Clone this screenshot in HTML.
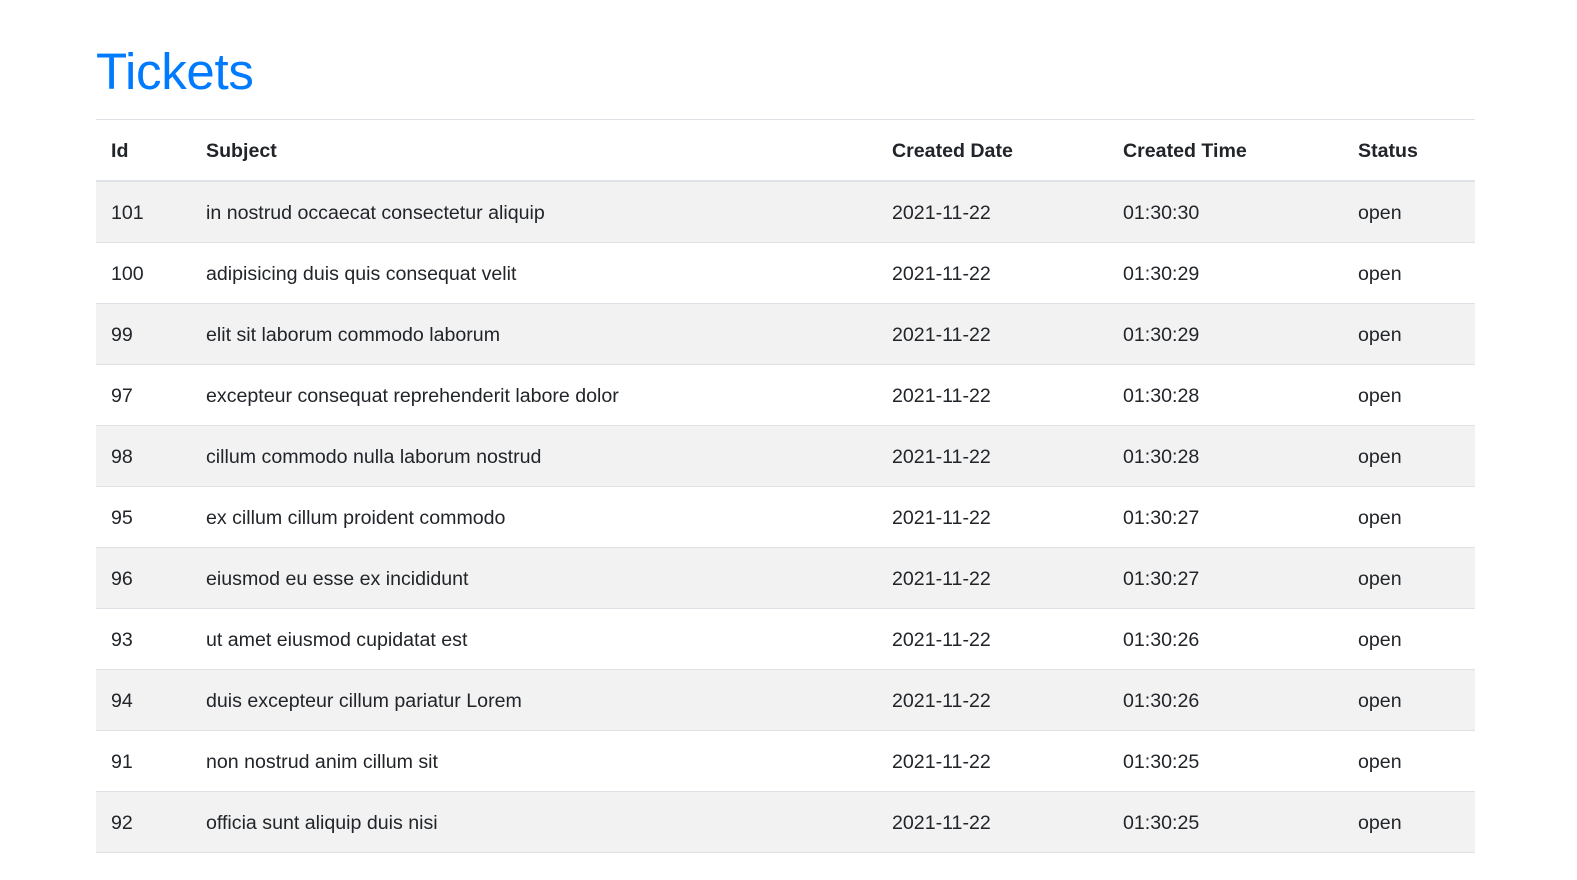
<!DOCTYPE html>
<html><head><style>
body{margin:0;background:#fff;font-family:"Liberation Sans",sans-serif;color:#212529}
.c{position:absolute;left:96px;top:0;width:1379px}
h1{margin:0;position:absolute;top:42px;left:0;font-size:51px;font-weight:500;color:#007bff;line-height:60px;letter-spacing:-0.3px}
table{position:absolute;top:119px;left:0;width:1379px;border-collapse:collapse;table-layout:fixed;font-size:19.6px}
th,td{padding:2px 15px 0;height:58px;text-align:left;border-top:1px solid #dee2e6;vertical-align:middle}
th{font-weight:bold;border-bottom:2px solid #dee2e6;height:58px}
tbody tr:nth-child(odd){background:#f2f2f2}
tbody tr:last-child td{border-bottom:1px solid #dee2e6}
</style></head><body>
<div class="c">
<h1>Tickets</h1>
<table>
<colgroup><col style="width:95px"><col style="width:686px"><col style="width:231px"><col style="width:235px"><col style="width:132px"></colgroup>
<thead><tr><th>Id</th><th>Subject</th><th>Created Date</th><th>Created Time</th><th>Status</th></tr></thead>
<tbody>
<tr><td>101</td><td>in nostrud occaecat consectetur aliquip</td><td>2021-11-22</td><td>01:30:30</td><td>open</td></tr>
<tr><td>100</td><td>adipisicing duis quis consequat velit</td><td>2021-11-22</td><td>01:30:29</td><td>open</td></tr>
<tr><td>99</td><td>elit sit laborum commodo laborum</td><td>2021-11-22</td><td>01:30:29</td><td>open</td></tr>
<tr><td>97</td><td>excepteur consequat reprehenderit labore dolor</td><td>2021-11-22</td><td>01:30:28</td><td>open</td></tr>
<tr><td>98</td><td>cillum commodo nulla laborum nostrud</td><td>2021-11-22</td><td>01:30:28</td><td>open</td></tr>
<tr><td>95</td><td>ex cillum cillum proident commodo</td><td>2021-11-22</td><td>01:30:27</td><td>open</td></tr>
<tr><td>96</td><td>eiusmod eu esse ex incididunt</td><td>2021-11-22</td><td>01:30:27</td><td>open</td></tr>
<tr><td>93</td><td>ut amet eiusmod cupidatat est</td><td>2021-11-22</td><td>01:30:26</td><td>open</td></tr>
<tr><td>94</td><td>duis excepteur cillum pariatur Lorem</td><td>2021-11-22</td><td>01:30:26</td><td>open</td></tr>
<tr><td>91</td><td>non nostrud anim cillum sit</td><td>2021-11-22</td><td>01:30:25</td><td>open</td></tr>
<tr><td>92</td><td>officia sunt aliquip duis nisi</td><td>2021-11-22</td><td>01:30:25</td><td>open</td></tr>
</tbody></table>
</div>
</body></html>
